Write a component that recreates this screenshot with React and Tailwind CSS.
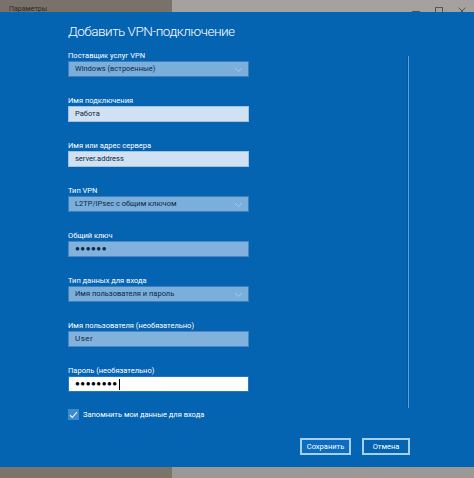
import React from "react";

const Chevron = () => (
  <svg width="9" height="6" viewBox="0 0 9 6" className="absolute right-[5px] top-[5px]">
    <path d="M1 1 L4.5 4.5 L8 1" fill="none" stroke="#a9c9e8" strokeWidth="1" />
  </svg>
);

function Field({ label, value, kind }) {
  const boxes = {
    select: "bg-[#7aaedb] border border-[#3f7fbe] text-[#0e2644]",
    light: "bg-[#cfe1f2] border border-[#9fc2e3] text-[#14263a]",
    mid: "bg-[#80b2dd] border border-[#4b88c3] text-[#0e2644]",
    pass: "bg-white border border-[#1f78c8] text-black",
  };
  return (
    <div className="flex flex-col">
      <div className="h-[11px] text-[7.5px] leading-[11px] text-white">{label}</div>
      <div className={`relative flex h-[16px] w-[181px] items-center pl-[6px] text-[7.5px] ${boxes[kind]}`}>
        <span className={kind === "mid" || kind === "pass" ? "text-[8px] tracking-[0.5px]" : ""}>{value}</span>
        {kind === "pass" && <span className="ml-[1px] h-[11px] w-px bg-black" />}
        {kind === "select" && <Chevron />}
      </div>
    </div>
  );
}

export default function App() {
  const fields = [
    { label: "Поставщик услуг VPN", value: "Windows (встроенные)", kind: "select" },
    { label: "Имя подключения", value: "Работа", kind: "light" },
    { label: "Имя или адрес сервера", value: "server.address", kind: "light" },
    { label: "Тип VPN", value: "L2TP/IPsec с общим ключом", kind: "select" },
    { label: "Общий ключ", value: "●●●●●●", kind: "mid" },
    { label: "Тип данных для входа", value: "Имя пользователя и пароль", kind: "select" },
    { label: "Имя пользователя (необязательно)", value: "User", kind: "mid" },
    { label: "Пароль (необязательно)", value: "●●●●●●●●", kind: "pass" },
  ];

  return (
    <div className="flex h-[478px] w-[474px] flex-col overflow-hidden font-['Roboto',sans-serif]">
      {/* title bar over the wallpaper */}
      <div className="flex h-[12px] items-start justify-between overflow-hidden bg-[linear-gradient(to_right,#7a716b_172px,#a4a19e_172px)] pt-[5px]">
        <span className="pl-[9px] text-[7px] leading-[8px] text-[#2a2a2a]">Параметры</span>
        <div className="flex items-start gap-[15px] pr-[8px] pt-[2px] text-[#444]">
          <svg width="8" height="8" viewBox="0 0 8 8"><path d="M0 4.5 H8" stroke="#555" strokeWidth="1" /></svg>
          <svg width="8" height="8" viewBox="0 0 8 8"><rect x="0.5" y="0.5" width="7" height="7" fill="none" stroke="#555" strokeWidth="1" /></svg>
          <svg width="8" height="8" viewBox="0 0 8 8"><path d="M0.5 0.5 L7.5 7.5 M7.5 0.5 L0.5 7.5" stroke="#555" strokeWidth="1" /></svg>
        </div>
      </div>

      {/* blue settings panel */}
      <div className="relative flex flex-1 flex-col bg-[#0564b2] pl-[68px] pt-[9px]">
        <h1 className="h-[20px] text-[13.5px] font-light leading-[20px] tracking-[-0.5px] text-white">Добавить VPN-подключение</h1>
        <div className="mt-[9px] flex flex-col gap-[18px]">
          {fields.map((f) => (
            <Field key={f.label} {...f} />
          ))}
        </div>

        <div className="mt-[17px] flex items-center gap-[4px]">
          <div className="flex h-[11px] w-[11px] items-center justify-center bg-[#3d8ad0]">
            <svg width="9" height="8" viewBox="0 0 9 8">
              <path d="M1 4.2 L3.3 6.5 L8 1" fill="none" stroke="white" strokeWidth="1.1" />
            </svg>
          </div>
          <span className="text-[7.5px] leading-[11px] text-white">Запомнить мои данные для входа</span>
        </div>

        <div className="mt-[18px] flex gap-[11px] pl-[232px]">
          <button className="h-[17px] w-[51px] border-2 border-[#a6d0f2] bg-[#0b6cc0] text-[7.5px] leading-[13px] text-white">Сохранить</button>
          <button className="h-[17px] w-[48px] border-2 border-[#a6d0f2] bg-[#0564b2] text-[7.5px] leading-[13px] text-white">Отмена</button>
        </div>

        {/* scrollbar thumb line */}
        <div className="absolute left-[407px] top-[44px] h-[352px] w-[2px] border-l border-[#03579c] bg-[#5f9ed4]" />
      </div>

      {/* wallpaper strip below */}
      <div className="h-[11px] bg-[linear-gradient(to_right,#7c736b_172px,#9b9896_172px)]" />
    </div>
  );
}
